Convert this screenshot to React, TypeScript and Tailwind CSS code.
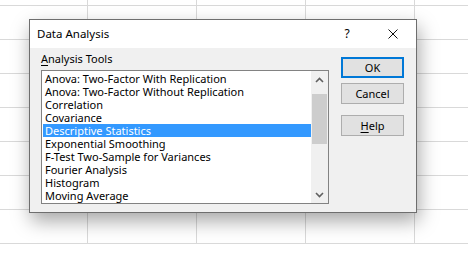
import React, { useState } from 'react';

const tools = [
    'Anova: Two-Factor With Replication',
    'Anova: Two-Factor Without Replication',
    'Correlation',
    'Covariance',
    'Descriptive Statistics',
    'Exponential Smoothing',
    'F-Test Two-Sample for Variances',
    'Fourier Analysis',
    'Histogram',
    'Moving Average',
];

const font = { fontFamily: '"Noto Sans", "Open Sans", sans-serif' };

const SheetGrid: React.FC = () => {
    const rows = Array.from({ length: 8 });
    const cols = Array.from({ length: 4 });
    return (
        <div className="flex flex-col">
            {rows.map((_, r) => (
                <div key={r} className={`flex border-b border-[#d9d9d9] ${r === 0 ? 'h-[6px]' : 'h-[34px]'}`}>
                    <div className="w-[88px] shrink-0 border-r border-[#d9d9d9]" />
                    {cols.map((_, c) => (
                        <div key={c} className="w-[109px] shrink-0 border-r border-[#d9d9d9]" />
                    ))}
                </div>
            ))}
        </div>
    );
};

const App: React.FC = () => {
    const [selected, setSelected] = useState(4);

    return (
        <div className="relative w-[468px] h-[259px] overflow-hidden bg-white text-[11px] text-black" style={font}>
            <SheetGrid />

            {/* dialog sits over the sheet */}
            <div className="absolute left-[29px] top-[19px] w-[388px] h-[194px] flex flex-col border border-[#6e6e6e] bg-[#f0f0f0] shadow-[2px_8px_18px_rgba(0,0,0,0.35)]">
                <div className="h-[28px] shrink-0 bg-white flex items-center pl-[7px] pr-[14px]">
                    <span className="flex-1 leading-none text-[11.5px]">Data Analysis</span>
                    <span className="w-[12px] text-center leading-none mr-[35px] text-[12px]">?</span>
                    <svg width="10" height="10" viewBox="0 0 10 10" className="mr-[4px]">
                        <path d="M0.5 0.5 L9.5 9.5 M9.5 0.5 L0.5 9.5" stroke="#111" strokeWidth="1" />
                    </svg>
                </div>

                <div className="flex-1 flex pl-[11px] pt-[3px]">
                    <div className="flex flex-col">
                        <div className="h-[16px] leading-[16px]">
                            <span className="underline underline-offset-2">A</span>nalysis Tools
                        </div>
                        <div className="mt-[3px] w-[288px] h-[134px] border border-[#828282] bg-white flex">
                            <div className="flex-1 pt-[1px] pl-[1px]">
                                {tools.map((t, i) => (
                                    <div
                                        key={t}
                                        onClick={() => setSelected(i)}
                                        className={`h-[13px] leading-[13px] pl-[2px] whitespace-nowrap ${selected === i ? 'bg-[#3399ff] text-white' : ''}`}
                                    >
                                        {t}
                                    </div>
                                ))}
                            </div>
                            <div className="w-[17px] shrink-0 bg-[#f0f0f0] flex flex-col">
                                <div className="h-[17px] flex items-center justify-center">
                                    <svg width="9" height="6" viewBox="0 0 9 6">
                                        <path d="M1 5 L4.5 1.5 L8 5" stroke="#606060" strokeWidth="1.6" fill="none" />
                                    </svg>
                                </div>
                                <div className="mt-[6px] h-[50px] mr-[1px] ml-[1px] bg-[#cdcdcd]" />
                                <div className="flex-1" />
                                <div className="h-[17px] flex items-center justify-center">
                                    <svg width="9" height="6" viewBox="0 0 9 6">
                                        <path d="M1 1 L4.5 4.5 L8 1" stroke="#606060" strokeWidth="1.6" fill="none" />
                                    </svg>
                                </div>
                            </div>
                        </div>
                    </div>

                    <div className="ml-[12px] mt-[6px] flex flex-col w-[63px]">
                        <button className="h-[21px] border-2 border-[#0078d7] bg-[#e1e1e1] leading-none">OK</button>
                        <button className="mt-[5px] h-[21px] border border-[#adadad] bg-[#e1e1e1] leading-none">Cancel</button>
                        <button className="mt-[11px] h-[21px] border border-[#adadad] bg-[#e1e1e1] leading-none">
                            <span className="underline underline-offset-2">H</span>elp
                        </button>
                    </div>
                </div>
            </div>
        </div>
    );
};

export default App;
